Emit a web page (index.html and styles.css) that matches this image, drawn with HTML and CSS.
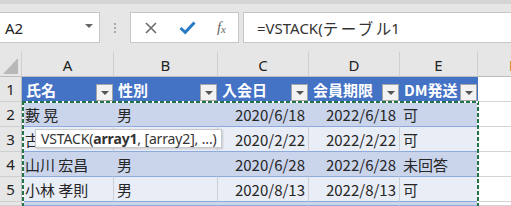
FILE: index.html
```html
<!DOCTYPE html>
<html lang="ja">
<head>
<meta charset="utf-8">
<link rel="stylesheet" href="styles.css">
</head>
<body>
<div class="app">
  <div class="toolbar">
    <div class="namebox"><span class="ref">A2</span><span class="nb-arrow"></span></div>
    <div class="grip"><i></i><i></i><i></i></div>
    <div class="btns">
      <svg class="ico" width="14" height="14" viewBox="0 0 14 14"><path d="M2 2 L12 12 M12 2 L2 12" stroke="#6b6b6b" stroke-width="1.6" fill="none"/></svg>
      <svg class="ico" width="17" height="15" viewBox="0 0 17 15"><path d="M1.5 8 L6.2 12.3 L15.5 2.5" stroke="#2a7bc4" stroke-width="3" fill="none" stroke-linejoin="miter"/></svg>
      <span class="fx"><i>f</i><sub>x</sub></span>
    </div>
    <div class="formula">=VSTACK(<span class="kana">テーブ</span><span class="kana last">ル</span>1</div>
  </div>
  <div class="sheet">
    <div class="corner"><svg width="22" height="25" viewBox="0 0 22 25"><polygon points="3,22 18,22 18,6" fill="#b8b8b8"/></svg></div>
    <div class="colh">A</div><div class="colh">B</div><div class="colh">C</div><div class="colh">D</div><div class="colh">E</div><div class="colh f">F</div>

    <div class="rowh">1</div>
    <div class="th">氏名<span class="flt"></span></div>
    <div class="th">性別<span class="flt"></span></div>
    <div class="th">入会日<span class="flt"></span></div>
    <div class="th">会員期限<span class="flt"></span></div>
    <div class="th">DM発送<span class="flt"></span></div>
    <div class="cell blank"></div>

    <div class="rowh">2</div>
    <div class="td band">藪 晃</div>
    <div class="td band">男</div>
    <div class="td band num">2020/6/18</div>
    <div class="td band num">2022/6/18</div>
    <div class="td band">可</div>
    <div class="cell blank"></div>

    <div class="rowh">3</div>
    <div class="td">古</div>
    <div class="td"></div>
    <div class="td num">2020/2/22</div>
    <div class="td num">2022/2/22</div>
    <div class="td">可</div>
    <div class="cell blank"></div>

    <div class="rowh">4</div>
    <div class="td band">山川 宏昌</div>
    <div class="td band">男</div>
    <div class="td band num">2020/6/28</div>
    <div class="td band num">2022/6/28</div>
    <div class="td band">未回答</div>
    <div class="cell blank"></div>

    <div class="rowh">5</div>
    <div class="td">小林 孝則</div>
    <div class="td">男</div>
    <div class="td num">2020/8/13</div>
    <div class="td num">2022/8/13</div>
    <div class="td">可</div>
    <div class="cell blank"></div>

    <div class="rowh"></div>
    <div class="td band"></div>
    <div class="td band"></div>
    <div class="td band"></div>
    <div class="td band"></div>
    <div class="td band"></div>
    <div class="cell blank"></div>

    <div class="marquee"></div>
    <div class="tip">VSTACK(<b>array1</b>, [array2], ...)</div>
  </div>
</div>
</body>
</html>
```
FILE: styles.css
```css
* { box-sizing: border-box; }
html, body { margin: 0; padding: 0; }
body {
  width: 511px; height: 206px; overflow: hidden;
  background: #fff;
  font-family: "Noto Sans CJK JP", "Noto Sans", sans-serif;
}
.app { width: 511px; overflow: hidden; }
.toolbar {
  height: 52px;
  background: #e6e6e6;
  border-top: 4px solid #d4d4d4;
  padding-top: 8px;
  display: flex;
  align-items: flex-start;
}
.namebox {
  width: 100px; height: 31px;
  background: #fff;
  border: 1px solid #c6c6c6;
  border-left: none;
  display: flex; align-items: center; justify-content: space-between;
  padding: 0 6px 0 5px;
  font-family: "Noto Sans", sans-serif;
  font-size: 15px; color: #222;
}
.nb-arrow {
  width: 0; height: 0;
  border-left: 4px solid transparent; border-right: 4px solid transparent;
  border-top: 4px solid #666;
  margin-top: -4px;
}
.grip {
  width: 30px; height: 31px;
  display: flex; flex-direction: column; align-items: center; justify-content: center; gap: 2px;
}
.grip i { width: 2px; height: 2px; background: #a8a8a8; display: block; }
.btns {
  width: 109px; height: 31px;
  background: #fff;
  border: 1px solid #c6c6c6;
  display: flex; align-items: center; justify-content: space-between;
  padding: 0 12px 0 13px;
}
.fx { font-family: "Liberation Serif", serif; font-size: 15px; color: #666; line-height: 1; }
.fx sub { font-size: 11px; font-style: italic; vertical-align: -1px; }
.formula {
  flex: 1; height: 31px;
  margin-left: 4px;
  background: #fff;
  border: 1px solid #c6c6c6;
  border-right: none;
  padding-left: 13px;
  display: flex; align-items: center;
  font-family: "Noto Sans", "Noto Sans CJK JP", sans-serif;
  font-size: 15px; color: #333;
  white-space: nowrap;
}
.formula .kana { font-family: "Noto Sans CJK JP", sans-serif; letter-spacing: 2.5px; font-size: 15.5px; }
.formula .kana.last { letter-spacing: 0; }
.sheet {
  position: relative;
  display: grid;
  grid-template-columns: 22px 92px 104px 91px 91px 78px 70px;
  grid-template-rows: 25px 25px 25px 25px 25px 25px 4px;
  width: 548px;
}
.corner { background: #e6e6e6; border-right: 1px solid #cfcfcf; border-bottom: 1px solid #bdbdbd; }
.corner svg { display: block; }
.colh {
  background: #e6e6e6;
  border-right: 1px solid #cfcfcf;
  border-bottom: 1px solid #bdbdbd;
  display: flex; align-items: center; justify-content: center;
  font-family: "Noto Sans", sans-serif; font-size: 15px; color: #222;
  padding-top: 1px;
}
.colh.f { color: #c55a11; border-right: none; }
.rowh {
  background: #e6e6e6;
  border-right: 1px solid #bdbdbd;
  border-bottom: 1px solid #cfcfcf;
  display: flex; align-items: center; justify-content: center;
  font-family: "Noto Sans", sans-serif; font-size: 15px; color: #222;
}
.th {
  background: #4472c4;
  color: #fff; font-weight: bold; font-size: 15px;
  display: flex; align-items: center; justify-content: space-between;
  padding: 0 1px 0 4px;
  border-bottom: 1px solid #8ea9db;
}
.flt {
  width: 17px; height: 17px;
  background: #f2f2f2;
  border: 1px solid #a6a6a6;
  position: relative;
  margin-top: 6px;
}
.flt::after {
  content: ""; position: absolute; left: 4px; top: 6px;
  border-left: 4px solid transparent; border-right: 4px solid transparent;
  border-top: 4px solid #555;
}
.td {
  background: #e9edf6;
  border-bottom: 1px solid #8ea9db;
  border-right: 1px solid #cbcfd6;
  font-size: 15px; color: #262626;
  display: flex; align-items: center;
  padding: 0 3px 0 3px;
  white-space: nowrap; overflow: hidden;
}
.td.band { background: #cad5ec; border-right-color: #cad5ec; }
.td.num { justify-content: flex-end; }
.cell.blank { background: #fff; border-bottom: 1px solid #d4d4d4; }
.marquee {
  position: absolute;
  left: 22px; top: 49px; width: 457px; height: 105px;
  background:
    repeating-linear-gradient(90deg, #217346 0 4px, #fff 4px 6px) top left / 100% 2px no-repeat,
    repeating-linear-gradient(180deg, #217346 0 4px, #fff 4px 6px) top left / 2px 100% no-repeat,
    repeating-linear-gradient(180deg, #217346 0 4px, #fff 4px 6px) top right / 2px 100% no-repeat;
  pointer-events: none;
}
.tip {
  position: absolute;
  left: 35px; top: 77px; width: 187px; height: 19px;
  background: #fff;
  border: 1px solid #c8c8c8;
  box-shadow: 1px 1px 2px rgba(0,0,0,0.15);
  font-family: "Noto Sans", sans-serif;
  font-size: 14px; color: #333;
  letter-spacing: -0.15px;
  padding-left: 5px;
  display: flex; align-items: center;
  white-space: nowrap;
}
.tip b { font-weight: bold; color: #333; }
```
